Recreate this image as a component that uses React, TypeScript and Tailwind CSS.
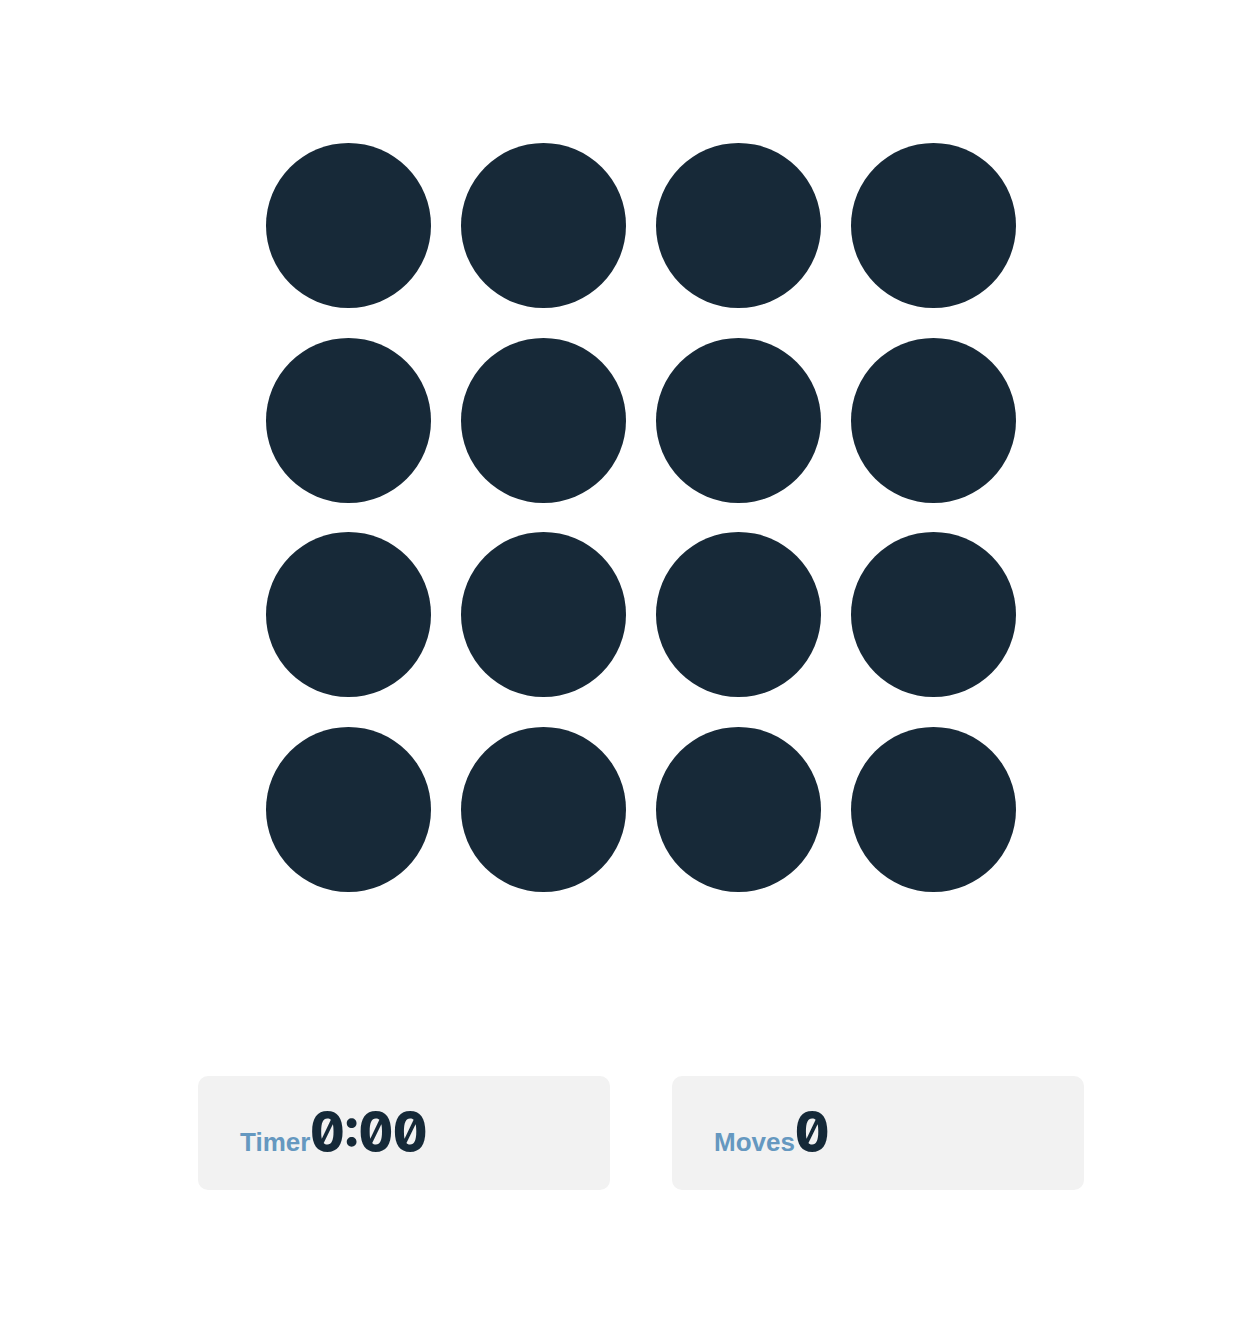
import React from "react";

const TILES = Array.from({ length: 16 }, (_, i) => i);

function Stat({ label, value }: { label: string; value: string }) {
  return (
    <div className="flex h-[114px] w-[412px] items-center rounded-[10px] bg-[#f2f2f2] pl-[42px]">
      <div className="flex items-baseline">
        <span className="font-['Liberation_Sans',Arial,sans-serif] text-[26px] font-bold leading-none text-[#6598c0]">
          {label}
        </span>
        <span className="font-['Inter',sans-serif] text-[53px] font-extrabold leading-none text-[#152938] tabular-nums slashed-zero">
          {value}
        </span>
      </div>
    </div>
  );
}

export default function App() {
  return (
    <div className="min-h-[1318px] bg-white">
      <div className="mx-auto w-[910px] pl-[24px] pt-[143px]">
        <div className="mx-auto grid w-[750px] grid-cols-4 gap-x-[30px] gap-y-[29.5px]">
          {TILES.map((t) => (
            <button key={t} className="h-[165px] w-[165px] rounded-full bg-[#172938]" />
          ))}
        </div>
        <div className="mt-[184px] flex gap-[62px]">
          <Stat label="Timer" value="0:00" />
          <Stat label="Moves" value="0" />
        </div>
      </div>
    </div>
  );
}
